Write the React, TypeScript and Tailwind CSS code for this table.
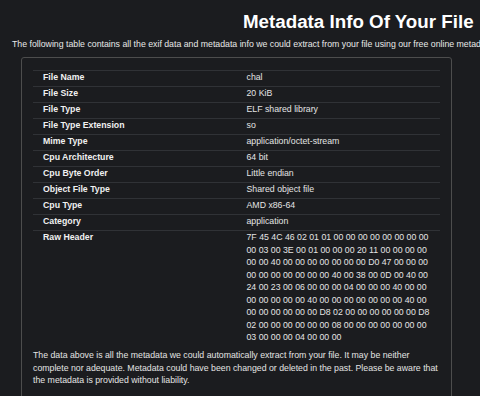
import React from "react";

const rows: [string, string][] = [
  ["File Name", "chal"],
  ["File Size", "20 KiB"],
  ["File Type", "ELF shared library"],
  ["File Type Extension", "so"],
  ["Mime Type", "application/octet-stream"],
  ["Cpu Architecture", "64 bit"],
  ["Cpu Byte Order", "Little endian"],
  ["Object File Type", "Shared object file"],
  ["Cpu Type", "AMD x86-64"],
  ["Category", "application"],
];

const hex = [
  "7F 45 4C 46 02 01 01 00 00 00 00 00 00 00 00",
  "00 03 00 3E 00 01 00 00 00 20 11 00 00 00 00",
  "00 00 40 00 00 00 00 00 00 00 D0 47 00 00 00",
  "00 00 00 00 00 00 00 40 00 38 00 0D 00 40 00",
  "24 00 23 00 06 00 00 00 04 00 00 00 40 00 00",
  "00 00 00 00 00 40 00 00 00 00 00 00 00 40 00",
  "00 00 00 00 00 00 D8 02 00 00 00 00 00 00 D8",
  "02 00 00 00 00 00 00 08 00 00 00 00 00 00 00",
  "03 00 00 00 04 00 00 00",
];

export default function App() {
  return (
    <div
      className="w-[480px] h-[396px] overflow-hidden bg-[#1b1c1f] text-[#e4e4e4]"
      style={{ fontFamily: '"Liberation Sans", Arial, sans-serif' }}
    >
      <h1 className="pt-[10px] pl-[243px] whitespace-nowrap text-[18.75px] leading-[24px] font-bold text-white">
        Metadata Info Of Your File
      </h1>
      <p className="mt-[4px] pl-[12px] whitespace-nowrap text-[8.75px] leading-[13px] text-[#e8e8e8]">
        The following table contains all the exif data and metadata info we could extract from your file using our free online metadata viewer.
      </p>
      <div className="mt-[6px] ml-[21px] w-[431px] h-[400px] rounded-[3px] border border-[#4d4d4d] px-[11px] pt-[12px] text-[8.75px] leading-[12.5px]">
        <div className="flex flex-col">
          {rows.map(([k, v]) => (
            <div key={k} className="grid grid-cols-2 border-t border-[#303236] pb-[2.5px]">
              <div className="pl-[10px] font-bold text-[#f0f0f0]">{k}</div>
              <div className="pl-[10px]">{v}</div>
            </div>
          ))}
          <div className="grid grid-cols-2 border-t border-[#303236] pb-[2.5px]">
            <div className="pl-[10px] font-bold text-[#f0f0f0]">Raw Header</div>
            <div className="pl-[10px] flex flex-col">
              {hex.map((l, i) => (
                <div key={i} className="whitespace-nowrap">{l}</div>
              ))}
            </div>
          </div>
        </div>
        <p className="mt-[3px]">
          The data above is all the metadata we could automatically extract from your file. It may be neither complete nor adequate. Metadata could have been changed or deleted in the past. Please be aware that the metadata is provided without liability.
        </p>
      </div>
    </div>
  );
}
